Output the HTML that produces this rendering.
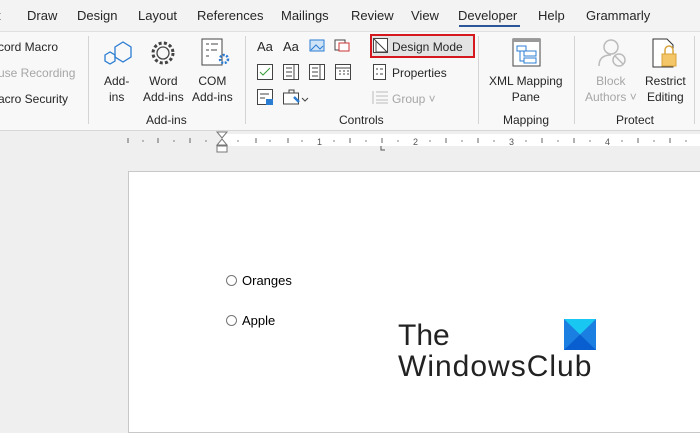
<!DOCTYPE html>
<html><head><style>
body{margin:0;width:700px;height:400px;overflow:hidden;background:#efefef;font-family:"Liberation Sans",sans-serif;position:relative}
.a{position:absolute;white-space:nowrap}
.tab{font-size:13px;color:#262626;top:8px}
.t{font-size:12px;color:#262626}
.g{color:#a6a6a6}
.sep{position:absolute;width:1px;background:#d4d4d4;top:36px;height:88px}
</style></head><body>
<div class="a" style="left:0;top:0;width:700px;height:31px;background:#f3f3f3"></div>
<div class="a" style="left:0;top:31px;width:700px;height:98px;background:#f8f8f8;border-top:1px solid #e0e0e0;border-bottom:1px solid #d6d6d6"></div>
<div class="a tab" style="left:-3px">t</div>
<div class="a tab" style="left:27px">Draw</div>
<div class="a tab" style="left:77px">Design</div>
<div class="a tab" style="left:138px">Layout</div>
<div class="a tab" style="left:197px">References</div>
<div class="a tab" style="left:281px">Mailings</div>
<div class="a tab" style="left:351px">Review</div>
<div class="a tab" style="left:411px">View</div>
<div class="a tab" style="left:458px">Developer</div>
<div class="a" style="left:459px;top:25px;width:61px;height:2px;background:#2b579a"></div>
<div class="a tab" style="left:538px">Help</div>
<div class="a tab" style="left:586px">Grammarly</div>

<div class="a t" style="left:-2px;top:40px">cord Macro</div>
<div class="a t g" style="left:-2px;top:66px">use Recording</div>
<div class="a t" style="left:-2px;top:92px">acro Security</div>
<div class="sep" style="left:88px"></div>

<svg class="a" style="left:100px;top:38px" width="36" height="30"><path d="M15 9 L23 4 L31 9 L31 19 L23 24 L15 19Z" fill="none" stroke="#2b7cd3" stroke-width="1.3"/><path d="M5 17 L10 14 L15 17 L15 23 L10 26 L5 23Z" fill="none" stroke="#2b7cd3" stroke-width="1.3"/></svg>
<div class="a t" style="left:104px;top:73px;text-align:center;line-height:16px">Add-<br>ins</div>
<svg class="a" style="left:148px;top:38px" width="30" height="30"><circle cx="15" cy="15" r="6" fill="none" stroke="#444" stroke-width="1.3"/><circle cx="15" cy="15" r="10" fill="none" stroke="#444" stroke-width="3" stroke-dasharray="3 2.3"/></svg>
<div class="a t" style="left:143px;top:73px;text-align:center;line-height:16px">Word<br>Add-ins</div>
<svg class="a" style="left:200px;top:38px" width="32" height="30"><rect x="2" y="1" width="20" height="26" fill="#fff" stroke="#444"/><path d="M6 6h3M11 6h7M6 12h3M11 12h6M6 18h3" stroke="#444"/><circle cx="24" cy="21" r="4" fill="none" stroke="#2b7cd3" stroke-width="2.5" stroke-dasharray="2 1.5"/></svg>
<div class="a t" style="left:192px;top:73px;text-align:center;line-height:16px">COM<br>Add-ins</div>
<div class="a t" style="left:146px;top:113px">Add-ins</div>
<div class="sep" style="left:245px"></div>

<div class="a t" style="left:257px;top:39px;font-size:13px">Aa</div>
<div class="a t" style="left:283px;top:39px;font-size:13px">Aa</div>
<svg class="a" style="left:309px;top:39px" width="16" height="14"><rect x="1" y="1" width="14" height="11" fill="#cfe3f7" stroke="#2b7cd3"/><path d="M2 11 L7 6 L11 10 L14 7" stroke="#2b7cd3" fill="none"/></svg>
<svg class="a" style="left:334px;top:39px" width="16" height="16"><rect x="1" y="1" width="10" height="10" fill="#fff" stroke="#444"/><rect x="5" y="4" width="10" height="8" fill="#fff" stroke="#c33"/></svg>
<svg class="a" style="left:257px;top:64px" width="16" height="16"><rect x="0.5" y="0.5" width="15" height="15" fill="#fff" stroke="#444"/><path d="M3 8 L6 11 L13 4" stroke="#3a9a3a" fill="none"/></svg>
<svg class="a" style="left:283px;top:64px" width="16" height="16"><rect x="0.5" y="0.5" width="15" height="15" fill="#fff" stroke="#444"/><path d="M3 4h6M3 8h6M3 12h6M11 1v15" stroke="#444"/></svg>
<svg class="a" style="left:309px;top:64px" width="16" height="16"><rect x="0.5" y="0.5" width="15" height="15" fill="#fff" stroke="#444"/><path d="M3 4h6M3 8h6M3 12h6M11 1v15" stroke="#444"/></svg>
<svg class="a" style="left:335px;top:64px" width="16" height="16"><rect x="0.5" y="0.5" width="15" height="15" fill="#fff" stroke="#444"/><path d="M1 4h14M4 7h2M8 7h2M12 7h2M4 10h2M8 10h2M12 10h2" stroke="#444"/></svg>
<svg class="a" style="left:257px;top:89px" width="18" height="18"><rect x="0.5" y="0.5" width="15" height="15" fill="#fff" stroke="#444"/><path d="M3 5h9M3 9h5" stroke="#444"/><rect x="9" y="10" width="7" height="6" fill="#2b7cd3"/></svg>
<svg class="a" style="left:283px;top:89px" width="26" height="18"><rect x="0.5" y="4" width="15" height="11" fill="#fff" stroke="#444"/><path d="M6 4V1h5v3" stroke="#444" fill="none"/><path d="M11 8l5 5" stroke="#2b7cd3" stroke-width="2.5"/><path d="M19 9l3 3 3-3" stroke="#444" fill="none"/></svg>

<div class="a" style="left:370px;top:34px;width:105px;height:24px;border:2px solid #d4181d;background:#e3e3e3;box-sizing:border-box"></div>
<svg class="a" style="left:373px;top:38px" width="16" height="16"><rect x="0.5" y="0.5" width="14" height="14" fill="#fff" stroke="#444"/><path d="M1 1 L14 14 M3 3v11h11" stroke="#444" fill="none"/></svg>
<div class="a t" style="left:392px;top:40px">Design Mode</div>
<svg class="a" style="left:373px;top:64px" width="14" height="16"><rect x="0.5" y="0.5" width="12" height="15" fill="#fff" stroke="#444"/><path d="M3 5h2M7 5h3M3 10h2M7 10h3" stroke="#444"/></svg>
<div class="a t" style="left:392px;top:66px">Properties</div>
<svg class="a" style="left:372px;top:89px" width="18" height="16"><path d="M1 2v13M4 3h12M4 7h12M4 11h12M4 14h12" stroke="#bbb" fill="none"/></svg>
<div class="a t g" style="left:392px;top:92px">Group ˅</div>
<div class="a t" style="left:339px;top:113px">Controls</div>
<div class="sep" style="left:478px"></div>

<svg class="a" style="left:512px;top:38px" width="30" height="30"><rect x="1" y="1" width="27" height="27" fill="#fff" stroke="#444"/><rect x="1" y="1" width="27" height="3" fill="#999"/><rect x="5" y="8" width="9" height="5" fill="none" stroke="#2b7cd3"/><rect x="12" y="13" width="12" height="5" fill="none" stroke="#2b7cd3"/><rect x="12" y="20" width="12" height="5" fill="none" stroke="#2b7cd3"/><path d="M8 13v10h4" stroke="#2b7cd3" fill="none"/></svg>
<div class="a t" style="left:489px;top:73px;text-align:center;line-height:16px">XML Mapping<br>Pane</div>
<div class="a t" style="left:503px;top:113px">Mapping</div>
<div class="sep" style="left:574px"></div>

<svg class="a" style="left:597px;top:38px" width="32" height="30"><circle cx="14" cy="9" r="7" fill="none" stroke="#bbb" stroke-width="1.5"/><path d="M2 28c0-8 5-11 12-11" stroke="#bbb" fill="none" stroke-width="1.5"/><circle cx="22" cy="22" r="6" fill="none" stroke="#bbb" stroke-width="1.5"/><path d="M18 18l8 8" stroke="#bbb" stroke-width="1.5"/></svg>
<div class="a t g" style="left:585px;top:73px;text-align:center;line-height:16px">Block<br>Authors ˅</div>
<svg class="a" style="left:652px;top:38px" width="28" height="30"><path d="M1 1h14l6 6v22H1Z" fill="#fff" stroke="#333"/><rect x="10" y="16" width="14" height="12" fill="#f5c668" stroke="#d9a33a"/><path d="M13 16v-4a4 4 0 0 1 8 0v4" stroke="#d9a33a" fill="none" stroke-width="1.5"/></svg>
<div class="a t" style="left:645px;top:73px;text-align:center;line-height:16px">Restrict<br>Editing</div>
<div class="a t" style="left:616px;top:113px">Protect</div>
<div class="sep" style="left:694px"></div>

<div class="a" style="left:222px;top:134px;width:478px;height:12px;background:#fff"></div>
<svg class="a" style="left:120px;top:130px" width="580" height="24">
<g stroke="#666">
<path d="M8 8v5M38 8v5M70 8v5M136 8v5M168 8v5M230 8v5M262 8v5M326 8v5M358 8v5M422 8v5M454 8v5M518 8v5M550 8v5"/>
</g>
<g fill="#666"><circle cx="23" cy="11" r=".7"/><circle cx="54" cy="11" r=".7"/><circle cx="86" cy="11" r=".7"/><circle cx="118" cy="11" r=".7"/><circle cx="150" cy="11" r=".7"/><circle cx="182" cy="11" r=".7"/><circle cx="214" cy="11" r=".7"/><circle cx="246" cy="11" r=".7"/><circle cx="278" cy="11" r=".7"/><circle cx="310" cy="11" r=".7"/><circle cx="342" cy="11" r=".7"/><circle cx="374" cy="11" r=".7"/><circle cx="406" cy="11" r=".7"/><circle cx="438" cy="11" r=".7"/><circle cx="470" cy="11" r=".7"/><circle cx="502" cy="11" r=".7"/><circle cx="534" cy="11" r=".7"/><circle cx="566" cy="11" r=".7"/></g>
<text x="197" y="15" font-size="9" fill="#555" font-family="Liberation Sans">1</text>
<text x="293" y="15" font-size="9" fill="#555" font-family="Liberation Sans">2</text>
<text x="389" y="15" font-size="9" fill="#555" font-family="Liberation Sans">3</text>
<text x="485" y="15" font-size="9" fill="#555" font-family="Liberation Sans">4</text>
<path d="M261 16v4h4" stroke="#555" fill="none"/>
<path d="M97 2h10l-5 6zM97 15h10l-5-6z" fill="#fff" stroke="#777"/>
<rect x="97" y="16" width="10" height="6" fill="#fff" stroke="#777"/>
</svg>

<div class="a" style="left:128px;top:171px;width:580px;height:260px;background:#fff;border:1px solid #c8c8c8"></div>
<div class="a" style="left:226px;top:275px;width:9px;height:9px;border-radius:50%;border:1px solid #777;background:#fff"></div>
<div class="a" style="left:242px;top:273px;font-size:13px;color:#000">Oranges</div>
<div class="a" style="left:226px;top:315px;width:9px;height:9px;border-radius:50%;border:1px solid #777;background:#fff"></div>
<div class="a" style="left:242px;top:313px;font-size:13px;color:#000">Apple</div>
<div class="a" style="left:398px;top:320px;font-size:30px;color:#222;line-height:32px">The</div>
<div class="a" style="left:398px;top:351px;font-size:30px;color:#222;line-height:32px;letter-spacing:1px">WindowsClub</div>
<svg class="a" style="left:564px;top:319px" width="32" height="31"><rect width="32" height="31" fill="#1a7fe0"/><path d="M0 0h32L16 15.5Z" fill="#19c8f2"/><path d="M0 31h32L16 15.5Z" fill="#0a5fd0"/></svg>
</body></html>
